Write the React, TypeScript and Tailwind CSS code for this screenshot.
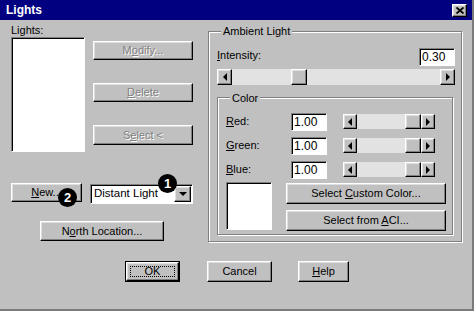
import React from 'react'
import clsx from 'clsx'

const raised =
    'bg-[#c0c0c0] border border-t-white border-l-white border-r-black border-b-black shadow-[inset_-1px_-1px_0_#808080,inset_1px_1px_0_#dfdfdf]'
const sunken =
    'bg-white border border-t-[#808080] border-l-[#808080] border-r-white border-b-white shadow-[inset_1px_1px_0_#000]'

function Btn({ children, className, disabled }: { children: React.ReactNode; className?: string; disabled?: boolean }) {
    return (
        <button
            type="button"
            className={clsx(
                'flex items-center justify-center leading-none',
                raised,
                disabled && 'text-[#808080] [text-shadow:1px_1px_0_#fff]',
                className
            )}
        >
            <span>{children}</span>
        </button>
    )
}

function Arrow({ dir, className }: { dir: 'left' | 'right' | 'down'; className?: string }) {
    const pts = dir === 'left' ? '4,0 0,4 4,8' : dir === 'right' ? '0,0 4,4 0,8' : '0,0 8,0 4,4'
    const w = dir === 'down' ? 8 : 4
    const h = dir === 'down' ? 4 : 8
    return (
        <div className={clsx('flex items-center justify-center shrink-0', raised, className)}>
            <svg width={w} height={h} viewBox={`0 0 ${w} ${h}`}>
                <polygon points={pts} fill="#000" />
            </svg>
        </div>
    )
}

function Scroll({ className, spacer, arrowW }: { className: string; spacer: string; arrowW: string }) {
    return (
        <div className={clsx('flex', className)}>
            <Arrow dir="left" className={arrowW} />
            <div className="flex flex-1 bg-[#e2e2e2]">
                <div className={spacer}></div>
                <div className={clsx('w-[16px] shrink-0', raised)}></div>
            </div>
            <Arrow dir="right" className={arrowW} />
        </div>
    )
}

function Badge({ n, className }: { n: string; className: string }) {
    return (
        <div className={clsx('absolute w-[19px] h-[19px] rounded-full bg-black text-white font-bold text-[13px] flex items-center justify-center leading-none', className)}>
            {n}
        </div>
    )
}

function ColorRow({ label, u }: { label: string; u: string }) {
    return (
        <div className="flex items-center h-[18px]">
            <span className="w-[65px]">
                <u>{u}</u>{label}
            </span>
            <div className={clsx('w-[36px] h-[18px] px-[2px] flex items-center text-[12px]', sunken)}>1.00</div>
            <Scroll className="ml-[16px] w-[92px] h-[15px]" spacer="flex-1" arrowW="w-[14px]" />
        </div>
    )
}

export default function App() {
    return (
        <div className="relative w-[474px] h-[311px] overflow-hidden bg-[#c0c0c0] border-r-2 border-b-2 border-[#7b7b7b] text-black text-[11px] font-['Liberation_Sans',Arial,sans-serif]">
            {/* title */}
            <div className="h-[20px] bg-[#000080] flex items-center justify-between pl-[6px] pr-[5px]">
                <span className="text-white font-bold text-[12px]">Lights</span>
                <div className={clsx('w-[15px] h-[13px] flex items-center justify-center', raised)}>
                    <svg width="8" height="7" viewBox="0 0 8 7">
                        <path d="M0.5 0.5 L7.5 6.5 M7.5 0.5 L0.5 6.5" stroke="#000" strokeWidth="1.8" />
                    </svg>
                </div>
            </div>

            <div className="flex pl-[11px] pt-[4px]">
                {/* left */}
                <div className="flex flex-col w-[182px]">
                    <div className="h-[13px] leading-[13px]">
                        Li<u>g</u>hts:
                    </div>
                    <div className="flex">
                        <div className={clsx('w-[74px] h-[115px]', sunken)}></div>
                        <div className="ml-[8px] flex flex-col pt-[4px] gap-[23px]">
                            <Btn disabled className="w-[100px] h-[19px]">
                                M<u>o</u>dify...
                            </Btn>
                            <Btn disabled className="w-[100px] h-[19px]">
                                <u>D</u>elete
                            </Btn>
                            <Btn disabled className="w-[100px] h-[20px]">
                                S<u>e</u>lect &lt;
                            </Btn>
                        </div>
                    </div>
                    <div className="flex items-start mt-[31px]">
                        <Btn className="w-[71px] h-[19px]">
                            <u>N</u>ew...
                        </Btn>
                        <div className={clsx('ml-[8px] mt-[1px] w-[103px] h-[20px] flex items-center justify-between pl-[3px] pr-[1px] text-[11.5px]', sunken)}>
                            <span>Distant Light</span>
                            <Arrow dir="down" className="w-[17px] h-[16px]" />
                        </div>
                    </div>
                    <Btn className="mt-[17px] ml-[29px] w-[124px] h-[20px]">
                        N<u>o</u>rth Location...
                    </Btn>
                </div>

                {/* ambient */}
                <fieldset className="ml-[15px] w-[254px] h-[218px] border border-[#808080] shadow-[inset_1px_1px_0_#fff,1px_1px_0_#fff] pl-[8px] pr-[6px] pt-[9px]">
                    <legend className="ml-[4px] px-[2px] bg-[#c0c0c0] leading-[14px]">Ambient Light</legend>
                    <div className="flex items-end justify-between">
                        <span className="mb-[2px]">
                            <u>I</u>ntensity:
                        </span>
                        <div className={clsx('w-[36px] h-[18px] px-[2px] flex items-center text-[12px]', sunken)}>0.30</div>
                    </div>
                    <Scroll className="mt-[3px] w-[238px] h-[16px]" spacer="w-[59px]" arrowW="w-[15px]" />

                    <fieldset className="mt-[6px] w-[236px] border border-[#808080] shadow-[inset_1px_1px_0_#fff,1px_1px_0_#fff] pl-[8px] pt-[8px] pb-[3px]">
                        <legend className="ml-[4px] px-[2px] bg-[#c0c0c0] leading-[14px]">Color</legend>
                        <div className="flex flex-col gap-[6px]">
                            <ColorRow u="R" label="ed:" />
                            <ColorRow u="G" label="reen:" />
                            <ColorRow u="B" label="lue:" />
                        </div>
                        <div className="flex mt-[3px]">
                            <div className={clsx('w-[46px] h-[48px]', sunken)}></div>
                            <div className="ml-[14px] flex flex-col gap-[6px] pt-[1px]">
                                <Btn className="w-[160px] h-[21px]">
                                    Select <u>C</u>ustom Color...
                                </Btn>
                                <Btn className="w-[160px] h-[21px]">
                                    Select from <u>A</u>CI...
                                </Btn>
                            </div>
                        </div>
                    </fieldset>
                </fieldset>
            </div>

            {/* bottom buttons */}
            <div className="flex pl-[125px] mt-[19px]">
                <button type="button" className="w-[55px] h-[21px] border border-black p-0">
                    <div className={clsx('w-full h-full flex items-center justify-center p-[3px]', raised)}>
                        <div className="w-full h-full flex items-center justify-center border border-dotted border-black leading-none">OK</div>
                    </div>
                </button>
                <Btn className="ml-[27px] w-[65px] h-[21px]">Cancel</Btn>
                <Btn className="ml-[26px] w-[51px] h-[21px]">
                    <u>H</u>elp
                </Btn>
            </div>

            <Badge n="1" className="left-[158px] top-[174px]" />
            <Badge n="2" className="left-[58px] top-[188px]" />
        </div>
    )
}
